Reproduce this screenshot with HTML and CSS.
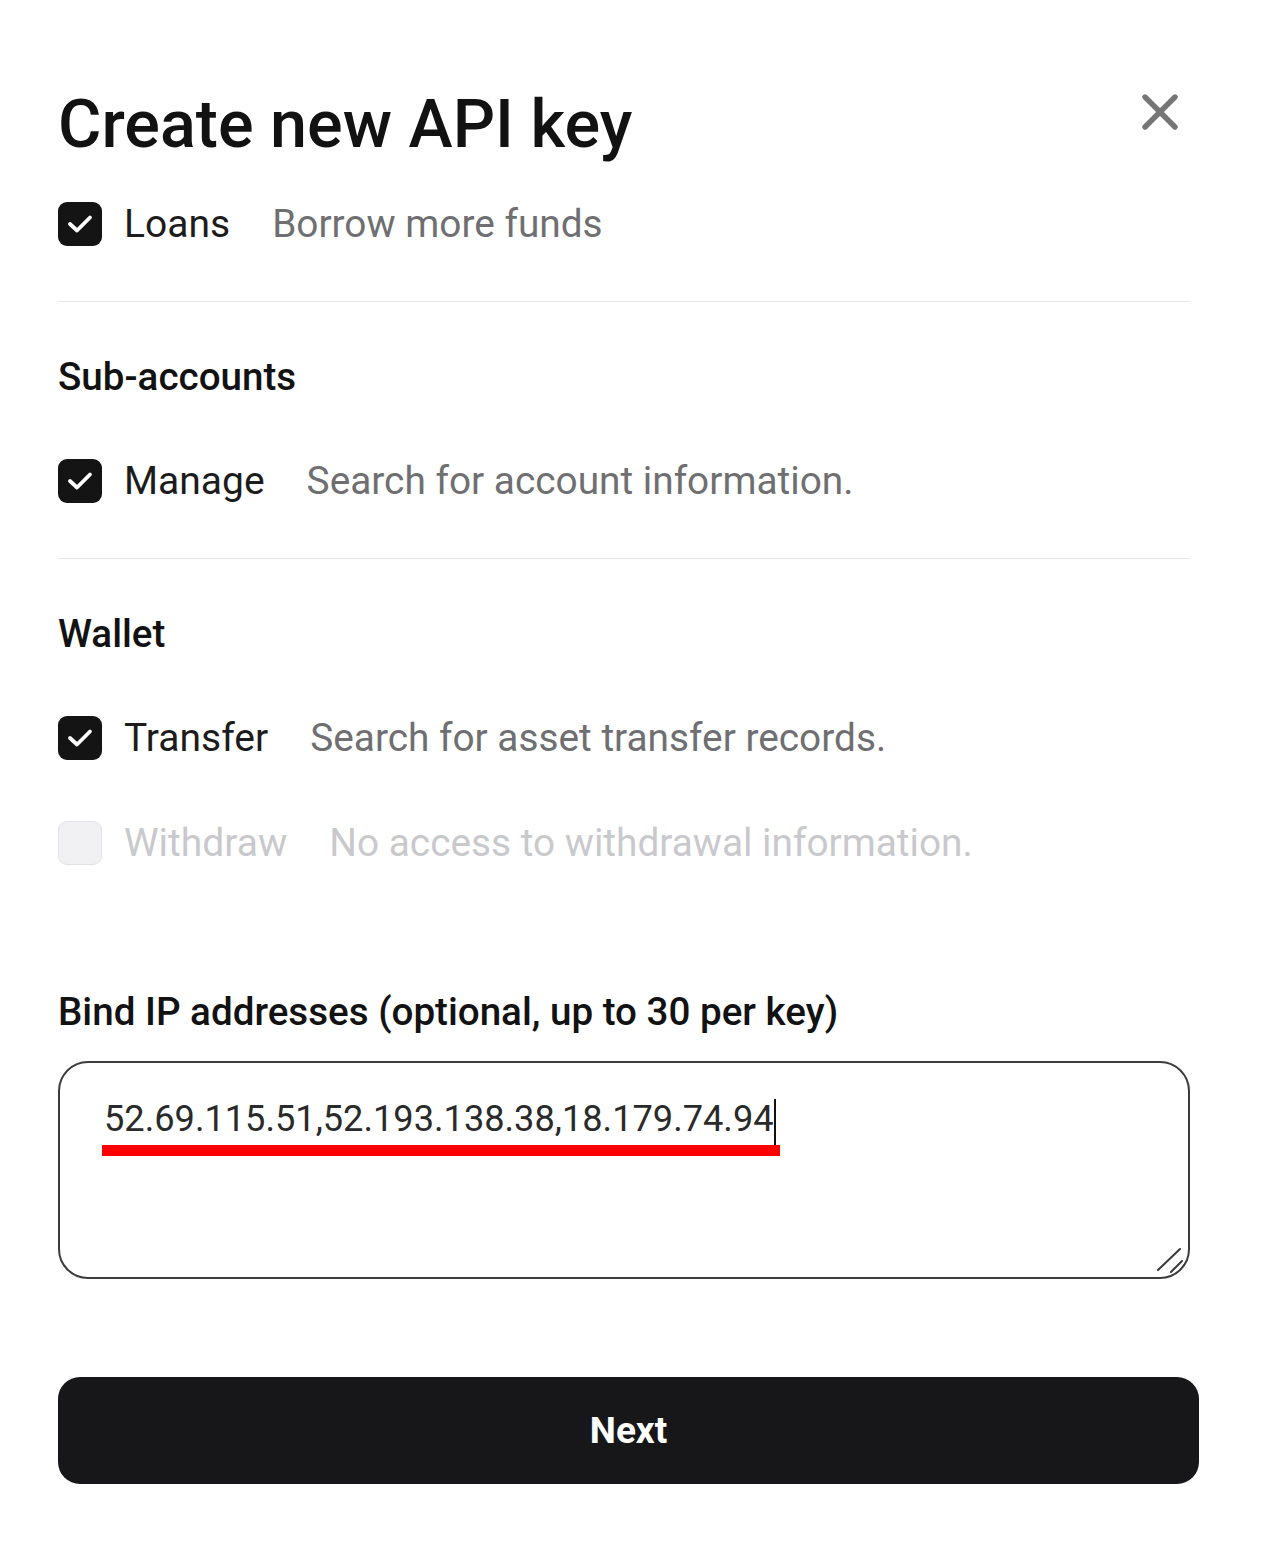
FILE: index.html
```html
<!DOCTYPE html>
<html lang="en">
<head>
<meta charset="utf-8">
<title>Create new API key</title>
<link rel="stylesheet" href="styles.css">
</head>
<body>
<div class="modal">
  <header class="header">
    <h1 class="title">Create new API key</h1>
    <svg class="close" viewBox="0 0 40 40" aria-label="Close">
      <path d="M5 5 L35 35 M35 5 L5 35" stroke="#767676" stroke-width="5.4" stroke-linecap="round" fill="none"/>
    </svg>
  </header>

  <div class="perm first">
    <span class="box"><svg viewBox="0 0 44 44" class="tick"><path d="M12 22 L19 28.5 L32 15.5" stroke="#fff" stroke-width="3.8" stroke-linecap="round" stroke-linejoin="round" fill="none"/></svg></span>
    <span class="label">Loans</span>
    <span class="desc">Borrow more funds</span>
  </div>

  <hr class="divider">

  <h2 class="section">Sub-accounts</h2>
  <div class="perm">
    <span class="box"><svg viewBox="0 0 44 44" class="tick"><path d="M12 22 L19 28.5 L32 15.5" stroke="#fff" stroke-width="3.8" stroke-linecap="round" stroke-linejoin="round" fill="none"/></svg></span>
    <span class="label">Manage</span>
    <span class="desc">Search for account information.</span>
  </div>

  <hr class="divider">

  <h2 class="section">Wallet</h2>
  <div class="perm">
    <span class="box"><svg viewBox="0 0 44 44" class="tick"><path d="M12 22 L19 28.5 L32 15.5" stroke="#fff" stroke-width="3.8" stroke-linecap="round" stroke-linejoin="round" fill="none"/></svg></span>
    <span class="label">Transfer</span>
    <span class="desc">Search for asset transfer records.</span>
  </div>
  <div class="perm disabled">
    <span class="box off"></span>
    <span class="label">Withdraw</span>
    <span class="desc">No access to withdrawal information.</span>
  </div>

  <h2 class="section ip-label">Bind IP addresses (optional, up to 30 per key)</h2>
  <div class="ip-box">
    <span class="ip-text">52.69.115.51,52.193.138.38,18.179.74.94</span>
    <svg class="grip" viewBox="0 0 30 30">
      <path d="M3 26 L25 5 M16 28 L27 17" stroke="#3a3a3a" stroke-width="2" stroke-linecap="round" fill="none"/>
    </svg>
  </div>

  <button class="next" type="button">Next</button>
</div>
</body>
</html>
```

FILE: styles.css
```css
* { box-sizing: border-box; }

body {
  margin: 0;
  background: #ffffff;
  font-family: Roboto, "Liberation Sans", Arial, sans-serif;
  color: #1a1a1a;
}

.modal {
  padding: 84px 76px 60px 58px;
}

.header {
  display: flex;
  justify-content: space-between;
  align-items: flex-start;
}

.title {
  margin: 0;
  font-size: 66.5px;
  line-height: 80px;
  font-weight: 500;
  color: #121212;
}

.close {
  width: 40px;
  height: 40px;
  margin-top: 8px;
  margin-right: 10px;
  flex: none;
}

.perm {
  display: flex;
  align-items: center;
  height: 44px;
  margin-top: 60px;
}

.perm.first {
  margin-top: 38px;
}

.perm.disabled {
  margin-top: 61px;
}

.box {
  width: 44px;
  height: 44px;
  border-radius: 9px;
  background: #141414;
  flex: none;
  display: flex;
}

.box.off {
  background: #f1f1f3;
  border: 1.5px solid #e3e3e7;
}

.tick {
  width: 44px;
  height: 44px;
}

.label {
  margin-left: 22px;
  font-size: 39px;
  line-height: 44px;
  color: #1c1c1c;
}

.desc {
  margin-left: 42px;
  font-size: 38.8px;
  line-height: 44px;
  color: #6f6f72;
}

.perm.disabled .label,
.perm.disabled .desc {
  color: #c9c9cd;
}

.divider {
  margin: 55px 0 0 0;
  border: 0;
  height: 1px;
  background: #e6e6e8;
}

.section {
  margin: 53px 0 0 0;
  font-size: 38.6px;
  line-height: 44px;
  font-weight: 500;
  color: #121212;
}

.ip-label {
  margin-top: 125px;
}

.ip-box {
  position: relative;
  margin-top: 27px;
  height: 218px;
  border: 2px solid #3c3c3c;
  border-radius: 30px;
  padding: 30px 0 0 42px;
}

.ip-text {
  display: inline-block;
  font-size: 36.2px;
  line-height: 52px;
  color: #2a2a2a;
  padding: 0 6px 0 2px;
  border-bottom: 11px solid #ff0000;
  position: relative;
}

.ip-text::after {
  content: "";
  position: absolute;
  right: 4px;
  top: 6px;
  height: 46px;
  border-right: 2px solid #111;
}

.grip {
  position: absolute;
  right: 3px;
  bottom: 3px;
  width: 30px;
  height: 30px;
}

.next {
  display: block;
  margin-top: 98px;
  width: calc(100% + 9px);
  height: 107px;
  border: 0;
  border-radius: 22px;
  background: #17171a;
  color: #ffffff;
  font-family: Roboto, "Liberation Sans", Arial, sans-serif;
  font-size: 37px;
  font-weight: 700;
}
```
